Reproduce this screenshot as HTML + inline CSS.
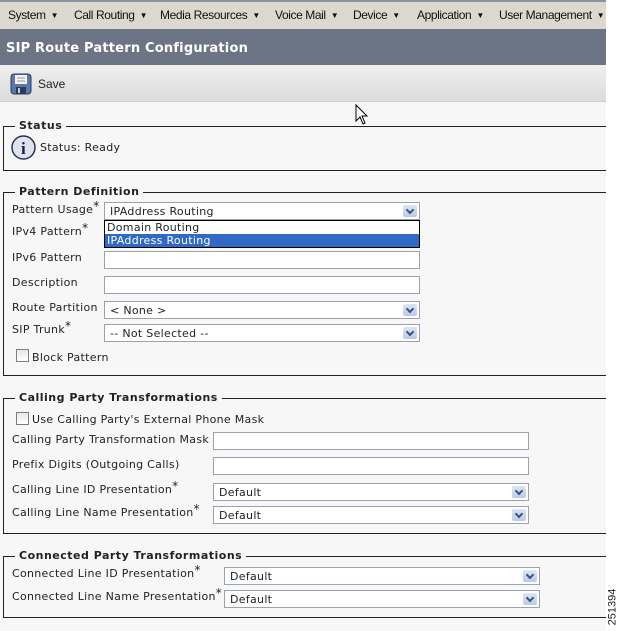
<!DOCTYPE html>
<html><head><style>
*{margin:0;padding:0;box-sizing:border-box}
body{width:619px;height:631px;background:#fff;position:relative;overflow:hidden;font-family:"DejaVu Sans",Verdana,sans-serif;font-size:11px;color:#222;letter-spacing:0.3px}
.a{position:absolute;white-space:nowrap}
.menu{left:0;top:0;width:606px;height:29px;background:#dcd8d0;border-top:2px solid #8a94a4;font-family:"Liberation Sans",Arial,sans-serif;font-size:12px;color:#111;letter-spacing:-0.4px}
.menu span{position:absolute;top:6px}
.menu i{font-style:normal;font-size:8px;margin-left:5px;vertical-align:1px}
.title{left:0;top:29px;width:606px;height:36px;background:#6b7585;color:#fff;font-weight:bold;font-size:13px;padding:12px 0 0 6px;letter-spacing:0.2px}
.tool{left:0;top:65px;width:606px;height:37px;background:linear-gradient(#efefef,#dcdcdc);border-bottom:1px solid #ccc}
.content{left:0;top:102px;width:606px;height:529px;background:#f7f7f7}
.fs{position:absolute;left:3px;width:603px;border:1px solid #222;border-right:none}
.lg{position:absolute;top:-8px;left:11px;background:#f7f7f7;font-weight:bold;padding:0 4px;font-size:11px;letter-spacing:0.5px}
sup{font-size:12px;vertical-align:3px;line-height:0}
.inp{position:absolute;background:#fff;border:1px solid #9aa3ad;height:18px;padding:2px 5px;font-size:11px}
.sel:after{content:"";position:absolute;right:2px;top:2px;width:14px;height:12px;background:linear-gradient(#dde6f5,#b9c9e6);border-radius:2px}
.sel:before{content:"";position:absolute;right:6px;top:4px;width:4px;height:4px;border-right:2px solid #3b4f80;border-bottom:2px solid #3b4f80;transform:rotate(45deg);z-index:2}
.cb{position:absolute;width:13px;height:13px;border:1px solid #7b8088;background:linear-gradient(#e8e8e8,#fff)}
</style></head><body>
<div class="a menu">
<span style="left:8px">System<i>▼</i></span><span style="left:74px">Call Routing<i>▼</i></span><span style="left:160px">Media Resources<i>▼</i></span><span style="left:275px">Voice Mail<i>▼</i></span><span style="left:353px">Device<i>▼</i></span><span style="left:417px">Application<i>▼</i></span><span style="left:499px">User Management<i>▼</i></span>
</div>
<div class="a title">SIP Route Pattern Configuration</div>
<div class="a tool">
<svg style="position:absolute;left:10px;top:8px" width="22" height="22" viewBox="0 0 22 22"><rect x="1" y="1" width="20" height="20" rx="3" fill="#5a78a8" stroke="#2a3c5c"/><rect x="5" y="2" width="12" height="9" fill="#f4f4f4"/><line x1="7" y1="5" x2="15" y2="5" stroke="#999"/><line x1="7" y1="8" x2="15" y2="8" stroke="#999"/><rect x="6" y="14" width="10" height="7" fill="#2a3c5c"/><rect x="8" y="15" width="2" height="5" fill="#ccc"/></svg>
<span class="a" style="left:38px;top:12px;font-family:'Liberation Sans',Arial,sans-serif;font-size:12px;letter-spacing:0">Save</span>
</div>
<div class="a content"></div>
<svg class="a" style="left:355px;top:104px" width="14" height="22" viewBox="0 0 14 22"><path d="M1 1 L1 17 L5 13 L8 20 L10 19 L7 12 L12 12 Z" fill="#fff" stroke="#000"/></svg>

<div class="fs" style="top:126px;height:45px"><div class="lg">Status</div></div>
<svg class="a" style="left:11px;top:135px" width="25" height="25" viewBox="0 0 25 25"><circle cx="12.5" cy="12.5" r="11.5" fill="#dfe3ee" stroke="#2a3450" stroke-width="1.5"/><text x="12.5" y="19" text-anchor="middle" font-family="Liberation Serif" font-weight="bold" font-size="17" fill="#1a2240">i</text></svg>
<span class="a" style="left:40px;top:141px">Status: Ready</span>

<div class="fs" style="top:192px;height:184px"><div class="lg">Pattern Definition</div></div>
<span class="a" style="left:12px;top:203px">Pattern Usage<sup>*</sup></span>
<span class="a" style="left:12px;top:225px">IPv4 Pattern<sup>*</sup></span>
<span class="a" style="left:12px;top:251px">IPv6 Pattern</span>
<span class="a" style="left:12px;top:276px">Description</span>
<span class="a" style="left:12px;top:301px">Route Partition</span>
<span class="a" style="left:12px;top:323px">SIP Trunk<sup>*</sup></span>
<div class="inp sel" style="left:104px;top:202px;width:316px">IPAddress Routing</div>
<div class="a" style="left:104px;top:220px;width:316px;height:28px;background:#fff;border:1px solid #000">
<div style="height:13px;padding-left:2px;line-height:13px">Domain Routing</div>
<div style="height:13px;padding-left:2px;line-height:13px;background:#316ac5;color:#fff">IPAddress Routing</div></div>
<div class="inp" style="left:104px;top:251px;width:316px"></div>
<div class="inp" style="left:104px;top:276px;width:316px"></div>
<div class="inp sel" style="left:104px;top:301px;width:316px">&lt; None &gt;</div>
<div class="inp sel" style="left:104px;top:324px;width:316px">-- Not Selected --</div>
<div class="cb" style="left:16px;top:349px"></div>
<span class="a" style="left:32px;top:351px">Block Pattern</span>

<div class="fs" style="top:398px;height:136px"><div class="lg">Calling Party Transformations</div></div>
<div class="cb" style="left:16px;top:412px"></div>
<span class="a" style="left:32px;top:413px">Use Calling Party's External Phone Mask</span>
<span class="a" style="left:12px;top:433px">Calling Party Transformation Mask</span>
<span class="a" style="left:12px;top:458px">Prefix Digits (Outgoing Calls)</span>
<span class="a" style="left:12px;top:483px">Calling Line ID Presentation<sup>*</sup></span>
<span class="a" style="left:12px;top:506px">Calling Line Name Presentation<sup>*</sup></span>
<div class="inp" style="left:213px;top:432px;width:316px"></div>
<div class="inp" style="left:213px;top:457px;width:316px"></div>
<div class="inp sel" style="left:213px;top:483px;width:316px">Default</div>
<div class="inp sel" style="left:213px;top:506px;width:316px">Default</div>

<div class="fs" style="top:556px;height:62px"><div class="lg">Connected Party Transformations</div></div>
<span class="a" style="left:12px;top:567px">Connected Line ID Presentation<sup>*</sup></span>
<span class="a" style="left:12px;top:590px">Connected Line Name Presentation<sup>*</sup></span>
<div class="inp sel" style="left:224px;top:567px;width:316px">Default</div>
<div class="inp sel" style="left:224px;top:590px;width:316px">Default</div>

<span class="a" style="left:594px;top:601px;transform:rotate(-90deg);font-family:'Liberation Sans',Arial,sans-serif;font-size:11px;color:#222;letter-spacing:0">251394</span>
</body></html>
